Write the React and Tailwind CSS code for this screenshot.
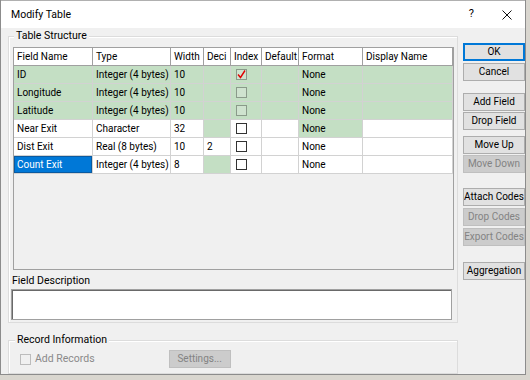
import React from "react";

const cols = [79, 78, 33, 27, 31, 37, 64, 90];
const headers = ["Field Name", "Type", "Width", "Deci", "Index", "Default", "Format", "Display Name"];

const G = "bg-[#c4dfc4]";

const rows = [
  { cells: ["ID", "Integer (4 bytes)", "10", "", "chk", "", "None", ""], green: [0, 1, 2, 3, 4, 5, 6, 7], checked: true },
  { cells: ["Longitude", "Integer (4 bytes)", "10", "", "box", "", "None", ""], green: [0, 1, 2, 3, 4, 5, 6, 7] },
  { cells: ["Latitude", "Integer (4 bytes)", "10", "", "box", "", "None", ""], green: [0, 1, 2, 3, 4, 5, 6, 7] },
  { cells: ["Near Exit", "Character", "32", "", "box", "", "None", ""], green: [3, 6] },
  { cells: ["Dist Exit", "Real (8 bytes)", "10", "2", "box", "", "None", ""], green: [] },
  { cells: ["Count Exit", "Integer (4 bytes)", "8", "", "box", "", "None", ""], green: [3], selected: 0 },
];

function CheckBox({ checked, dim }) {
  return (
    <div
      className={
        "w-[11px] h-[11px] border flex items-center justify-center shrink-0 " +
        (dim ? "border-[#8a9a8a] bg-[#cfe3cf]" : "border-[#333333] bg-white")
      }
    >
      {checked && (
        <svg width="9" height="9" viewBox="0 0 9 9">
          <path d="M1 4.5 L3.5 7.5 L8 0.5" fill="none" stroke="#e00000" strokeWidth="1.4" />
        </svg>
      )}
    </div>
  );
}

function Btn({ children, disabled, focus, className = "" }) {
  return (
    <div
      className={
        "w-[62px] h-[18px] flex items-center justify-center text-[10px] leading-none whitespace-nowrap overflow-hidden " +
        (disabled
          ? "bg-[#cccccc] border border-[#bfbfbf] text-[#838383] "
          : focus
          ? "bg-[#e1e1e1] border-2 border-[#0078d7] text-black "
          : "bg-[#e1e1e1] border border-[#adadad] text-black ") +
        className
      }
    >
      {children}
    </div>
  );
}

export default function App() {
  return (
    <div
      className="w-[530px] h-[380px] bg-[#d9d6cf] overflow-hidden text-black"
      style={{ fontFamily: 'Roboto, "Noto Sans", sans-serif' }}
    >
      <div className="w-[526px] h-[375px] bg-[#f0f0f0] border-l border-r border-b border-[#8c8c8c] flex flex-col">
        {/* title bar */}
        <div className="h-[28px] bg-white border-t border-[#b0b0b0] flex items-center pl-[10px] pr-[13px] shrink-0">
          <div className="text-[10.5px] whitespace-nowrap">Modify Table</div>
          <div className="flex-1" />
          <div className="text-[11px] mr-[28px]">?</div>
          <svg width="10" height="10" viewBox="0 0 10 10">
            <path d="M0.5 0.5 L9.5 9.5 M9.5 0.5 L0.5 9.5" stroke="#111" strokeWidth="1" />
          </svg>
        </div>

        <div className="flex flex-1 pl-[7px]">
          {/* left column */}
          <div className="w-[450px] flex flex-col">
            {/* Table Structure group */}
            <div className="relative mt-[8px] h-[287px] border border-[#dcdcdc] shadow-[inset_1px_1px_0_#ffffff] pt-[10px] pl-[4px]">
              <div className="absolute left-[5px] top-[-8px] px-[2px] bg-[#f0f0f0] text-[10.5px] leading-[14px] whitespace-nowrap">
                Table Structure
              </div>
              {/* grid */}
              <div className="w-[441px] h-[223px] border border-[#a0a0a0] bg-[#f0f0f0] text-[10px]">
                <div className="flex h-[18px]">
                  {headers.map((h, i) => (
                    <div
                      key={i}
                      className="bg-white border-r border-b border-[#a0a0a0] shadow-[inset_1px_1px_0_#ffffff] pl-[3px] flex items-center leading-none shrink-0 whitespace-nowrap overflow-hidden"
                      style={{ width: cols[i] }}
                    >
                      {h}
                    </div>
                  ))}
                </div>
                {rows.map((r, ri) => (
                  <div key={ri} className="flex h-[18px]">
                    {r.cells.map((c, ci) => {
                      const green = r.green.includes(ci);
                      const sel = r.selected === ci;
                      return (
                        <div
                          key={ci}
                          className={
                            "border-r border-b border-[#d2d2d2] flex items-center leading-none shrink-0 whitespace-nowrap overflow-hidden " +
                            (ci === 4 ? "pl-[5px] " : "pl-[3px] ") +
                            (sel
                              ? "bg-[#0078d7] text-white shadow-[inset_0_0_0_1px_#0a5aa0] "
                              : green
                              ? G + " "
                              : "bg-white ")
                          }
                          style={{ width: cols[ci] }}
                        >
                          {c === "chk" ? (
                            <CheckBox checked dim={green} />
                          ) : c === "box" ? (
                            <CheckBox dim={green} />
                          ) : (
                            c
                          )}
                        </div>
                      );
                    })}
                  </div>
                ))}
              </div>
              <div className="text-[10.5px] leading-[14px] mt-[4px] ml-[-1px] whitespace-nowrap">Field Description</div>
              <div className="ml-[-2px] mt-[1px] w-[441px] h-[31px] bg-white border border-[#a0a0a0] shadow-[inset_1px_1px_0_#696969]" />
            </div>

            {/* Record Information group */}
            <div className="relative mt-[17px] h-[34px] border border-[#dcdcdc] shadow-[inset_1px_1px_0_#ffffff] flex items-center pl-[11px]">
              <div className="absolute left-[6px] top-[-8px] px-[2px] bg-[#f0f0f0] text-[10.5px] leading-[14px] whitespace-nowrap">
                Record Information
              </div>
              <div className="flex items-center mt-[4px]">
                <div className="w-[11px] h-[11px] border border-[#bcbcbc] bg-[#f0f0f0]" />
                <div className="ml-[4px] text-[10.5px] text-[#8a8a8a] leading-none whitespace-nowrap">Add Records</div>
              </div>
              <Btn disabled className="ml-[74px] mt-[4px]">Settings...</Btn>
            </div>
          </div>

          {/* right buttons */}
          <div className="ml-[5px] pt-[15px] flex flex-col">
            <Btn focus>OK</Btn>
            <Btn className="mt-[2px]">Cancel</Btn>
            <Btn className="mt-[12px]">Add Field</Btn>
            <Btn className="mt-[1px]">Drop Field</Btn>
            <Btn className="mt-[6px]">Move Up</Btn>
            <Btn disabled className="mt-[1px]">Move Down</Btn>
            <Btn className="mt-[15px]">Attach Codes</Btn>
            <Btn disabled className="mt-[2px]">Drop Codes</Btn>
            <Btn disabled className="mt-[2px]">Export Codes</Btn>
            <Btn className="mt-[16px]">Aggregation</Btn>
          </div>
        </div>
      </div>
    </div>
  );
}
